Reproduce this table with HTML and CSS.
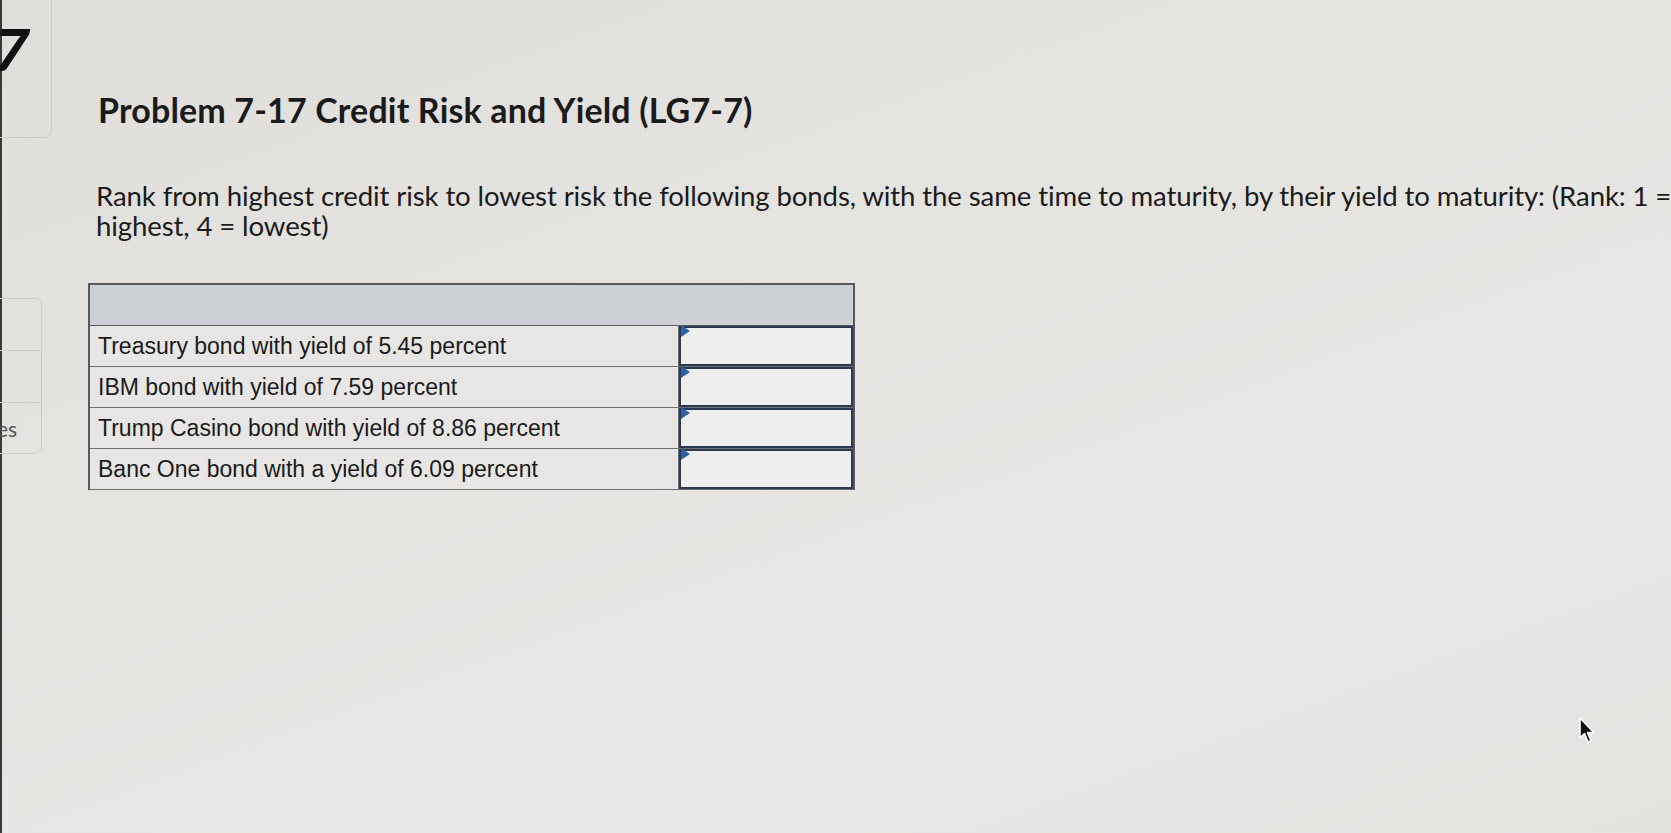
FILE: index.html
```html
<!DOCTYPE html>
<html lang="en">
<head>
<meta charset="utf-8">
<title>Problem 7-17 Credit Risk and Yield (LG7-7)</title>
<link rel="stylesheet" href="styles.css">
</head>
<body>
<div class="page">
  <aside class="sidebar">
    <div class="side-top"><span class="side-num">7</span></div>
    <div class="side-list">
      <div class="side-item"></div>
      <div class="side-item"></div>
      <div class="side-item"><span class="side-label">es</span></div>
    </div>
  </aside>
  <main class="content">
    <h1 class="title">Problem 7-17 Credit Risk and Yield (LG7-7)</h1>
    <p class="prompt">Rank from highest credit risk to lowest risk the following bonds, with the same time to maturity, by their yield to maturity: (Rank: 1 =<br>highest, 4 = lowest)</p>
    <table class="rank-table">
      <thead>
        <tr><th colspan="2" class="head-cell"></th></tr>
      </thead>
      <tbody>
        <tr><td class="label-cell">Treasury bond with yield of 5.45 percent</td><td class="input-cell"><div class="input-box"></div></td></tr>
        <tr><td class="label-cell">IBM bond with yield of 7.59 percent</td><td class="input-cell"><div class="input-box"></div></td></tr>
        <tr><td class="label-cell">Trump Casino bond with yield of 8.86 percent</td><td class="input-cell"><div class="input-box"></div></td></tr>
        <tr><td class="label-cell">Banc One bond with a yield of 6.09 percent</td><td class="input-cell"><div class="input-box"></div></td></tr>
      </tbody>
    </table>
  </main>
  <svg class="cursor" width="18" height="28" viewBox="0 0 18 28" aria-hidden="true">
    <path d="M2 1 L2 21 L6.5 16.5 L10 25 L13 23.8 L9.6 15.6 L16 15.6 Z" fill="#111" stroke="#fff" stroke-width="1.6" stroke-linejoin="round"/>
  </svg>
</div>
</body>
</html>
```
FILE: styles.css
```css
html, body {
  margin: 0;
  padding: 0;
  height: 100%;
  overflow: hidden;
}
body {
  background: linear-gradient(160deg, #dfdedb 0%, #e5e4e1 40%, #e8e7e5 75%, #e3e2df 100%);
  color: #1b1b1b;
  font-family: "Lato", "Open Sans", sans-serif;
}
.page {
  position: relative;
  display: flex;
  height: 833px;
  border-left: 2px solid #3a3a3a;
  box-sizing: border-box;
}
.sidebar {
  width: 50px;
  flex: none;
  display: flex;
  flex-direction: column;
}
.side-top {
  height: 137px;
  margin-left: -10px;
  border: 1px solid #cfcdca;
  border-top: none;
  border-radius: 0 0 8px 0;
  position: relative;
}
.side-num {
  position: absolute;
  left: 2px;
  top: 20px;
  font: 900 58px/1 "Lato", sans-serif;
  color: #111;
  transform: skewX(-10deg);
}
.side-list {
  margin-top: 160px;
  margin-left: -10px;
  width: 48px;
  border: 1px solid #d0ceca;
  border-radius: 0 6px 8px 0;
  display: flex;
  flex-direction: column;
}
.side-item {
  height: 51px;
  border-bottom: 1px solid #d0ceca;
  display: flex;
  align-items: center;
}
.side-item:last-child {
  border-bottom: none;
  height: 50px;
}
.side-label {
  font: 21px "Lato", sans-serif;
  color: #555;
  margin-left: 4px;
}
.content {
  padding: 0 0 0 36px;
  min-width: 0;
}
.title {
  margin: 90px 0 0 10px;
  font-size: 34px;
  font-weight: 700;
  line-height: 40px;
  letter-spacing: 0.15px;
}
.prompt {
  margin: 51px 0 0 8px;
  font-size: 27.6px;
  line-height: 30px;
  white-space: nowrap;
  letter-spacing: -0.12px;
}
.rank-table {
  margin-top: 42px;
  border-collapse: collapse;
  width: 767px;
}
.head-cell {
  height: 40px;
  padding: 0;
  background: #cdd0d4;
  border: 2px solid #55585d;
  border-bottom: 1px solid #55585d;
}
.label-cell {
  height: 40px;
  padding: 0 8px;
  border: 1px solid #707070;
  border-left: 2px solid #55585d;
  font-family: "Liberation Sans", Arial, sans-serif;
  font-size: 23px;
  color: #1a1a1a;
  background: #e7e6e4;
  width: 572px;
}
.input-cell {
  padding: 0;
  border: 1px solid #707070;
  border-right: 2px solid #55585d;
  height: 40px;
}
.input-box {
  position: relative;
  height: 36px;
  border: 2px solid #2c3852;
  background: #eeeeec;
}
.input-box::before {
  content: "";
  position: absolute;
  left: 0;
  top: -3px;
  border-top: 6px solid transparent;
  border-bottom: 6px solid transparent;
  border-left: 9px solid #2b62a4;
}
.cursor {
  position: absolute;
  left: 1576px;
  top: 717px;
}
```
